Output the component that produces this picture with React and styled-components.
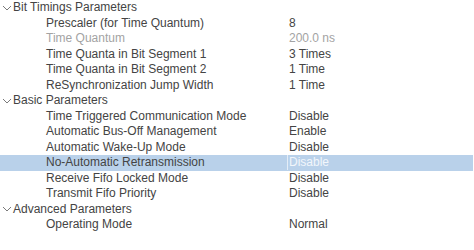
import styled, { createGlobalStyle } from "styled-components"

const Global = createGlobalStyle`
    body {
        margin: 0;
        background: #fff;
        font-family: "Liberation Sans", Arial, sans-serif;
    }
`
const Tree = styled.div`
    width: 474px;
    height: 250px;
    overflow: hidden;
`
const Row = styled.div`
    display: grid;
    grid-template-columns: 287px 1fr;
    height: 15.5px;
    align-items: center;
    font-size: 12px;
    color: ${p => (p.$dim ? "#a3a3a3" : "#444")};
    background: ${p => (p.$selected ? "#b9d1ea" : "transparent")};
    margin-right: 1px;
`
const Label = styled.div`
    display: flex;
    align-items: center;
    padding-left: ${p => (p.$group ? "2px" : "46px")};
    white-space: nowrap;
    line-height: 15px;
`
const Value = styled.div`
    padding-left: 1px;
    white-space: nowrap;
    line-height: 15px;
    color: ${p => (p.$selected ? "#f2f6fb" : "inherit")};
    border-left: 1px solid ${p => (p.$selected ? "#e4edf7" : "transparent")};
`
const Chevron = () => (
    <svg width="10" height="6" viewBox="0 0 10 6" style={{ marginRight: 1 }}>
        <path d="M1 1 L5 5 L9 1" fill="none" stroke="#7a7a7a" strokeWidth="1" />
    </svg>
)

const groups = [
    {
        title: "Bit Timings Parameters",
        items: [
            ["Prescaler (for Time Quantum)", "8"],
            ["Time Quantum", "200.0 ns", true],
            ["Time Quanta in Bit Segment 1", "3 Times"],
            ["Time Quanta in Bit Segment 2", "1 Time"],
            ["ReSynchronization Jump Width", "1 Time"],
        ],
    },
    {
        title: "Basic Parameters",
        items: [
            ["Time Triggered Communication Mode", "Disable"],
            ["Automatic Bus-Off Management", "Enable"],
            ["Automatic Wake-Up Mode", "Disable"],
            ["No-Automatic Retransmission", "Disable", false, true],
            ["Receive Fifo Locked Mode", "Disable"],
            ["Transmit Fifo Priority", "Disable"],
        ],
    },
    {
        title: "Advanced Parameters",
        items: [["Operating Mode", "Normal"]],
    },
]

const App = () => {
    return (
        <>
            <Global />
            <Tree>
                {groups.map(g => (
                    <div key={g.title}>
                        <Row>
                            <Label $group>
                                <Chevron />
                                {g.title}
                            </Label>
                            <Value></Value>
                        </Row>
                        {g.items.map(([name, val, dim, sel]) => (
                            <Row key={name} $dim={dim} $selected={sel}>
                                <Label>{name}</Label>
                                <Value $selected={sel}>{val}</Value>
                            </Row>
                        ))}
                    </div>
                ))}
            </Tree>
        </>
    )
}

export default App
